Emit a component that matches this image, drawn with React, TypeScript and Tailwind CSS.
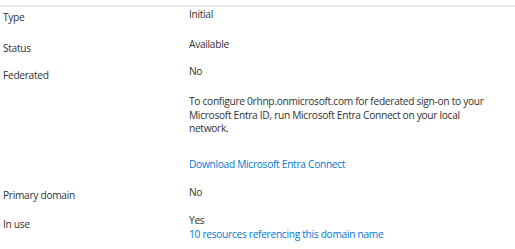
import React from "react";

const font = { fontFamily: '"Segoe UI", "Open Sans", "Noto Sans", sans-serif' };

export default function App() {
  return (
    <div className="w-[515px] h-[249px] bg-white text-[10.2px] tracking-[-0.3px] leading-[13.5px] text-[#323130] overflow-hidden" style={font}>
      <div className="mt-[5px] h-[2px] bg-[#e6e6e6]" />

      <div className="flex items-start pt-[0.5px] pb-[13px]">
        <div className="w-[189px] shrink-0 pl-[3px] pt-[3.5px]">Type</div>
        <div>Initial</div>
      </div>

      <div className="flex items-start pb-[9.5px]">
        <div className="w-[189px] shrink-0 pl-[3px] pt-[4px]">Status</div>
        <div>Available</div>
      </div>

      <div className="flex items-start pb-[14px]">
        <div className="w-[189px] shrink-0 pl-[3px] pt-[4px]">Federated</div>
        <div className="w-[300px]">
          <div>No</div>
          <p className="mt-[17px]">
            To configure 0rhnp.onmicrosoft.com for federated sign-on to your Microsoft Entra ID, run Microsoft Entra Connect on your local network.
          </p>
          <a className="block mt-[22.5px] text-[#0078d4]" href="#">Download Microsoft Entra Connect</a>
        </div>
      </div>

      <div className="flex items-start pb-[12px]">
        <div className="w-[189px] shrink-0 pl-[3px] pt-[3px]">Primary domain</div>
        <div>No</div>
      </div>

      <div className="flex items-start">
        <div className="w-[189px] shrink-0 pl-[3px] pt-[3.5px]">In use</div>
        <div>
          <div>Yes</div>
          <a className="block text-[#0078d4]" href="#">10 resources referencing this domain name</a>
        </div>
      </div>
    </div>
  );
}
